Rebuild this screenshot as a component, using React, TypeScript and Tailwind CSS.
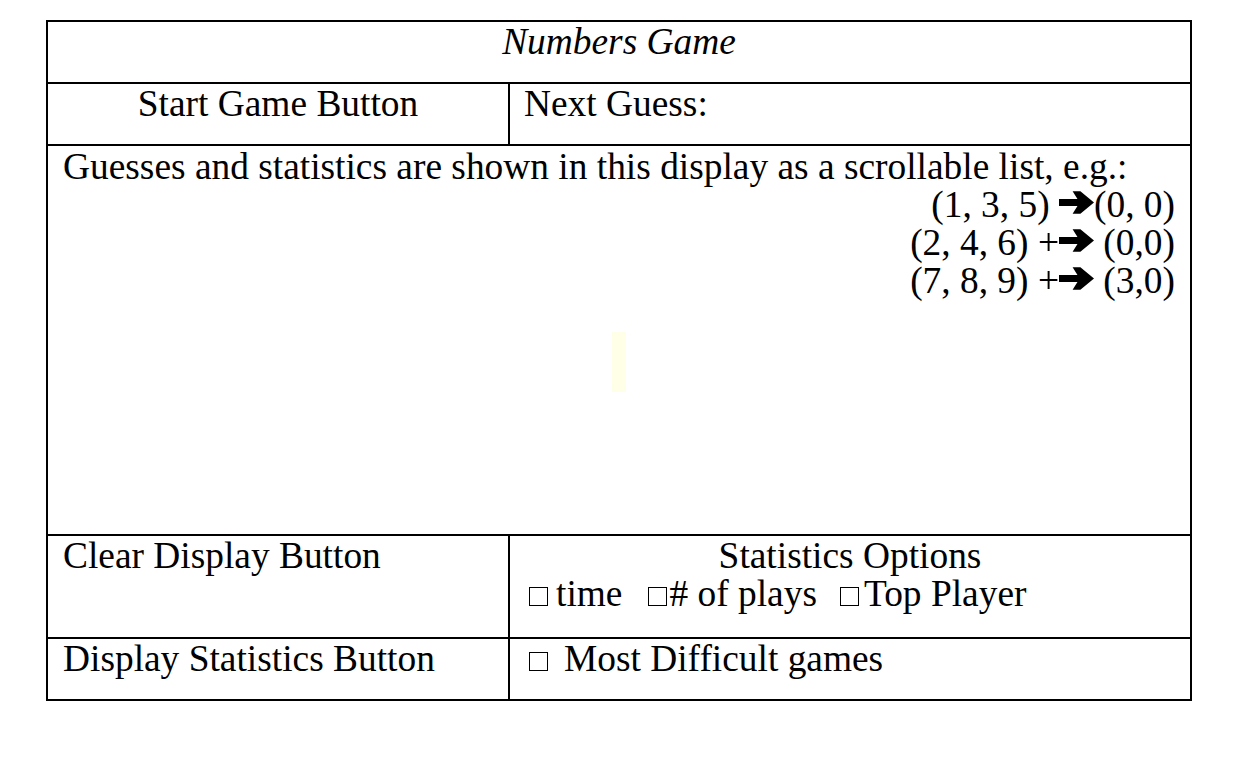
import React from 'react';

// Heavy wide-headed arrow used between a guess and its score
const Arrow: React.FC = () => (
  <svg
    width="35"
    height="23"
    viewBox="0 0 36 23"
    className="inline-block align-[3px]"
    aria-hidden="true"
  >
    <polygon points="0,8 19,8 14,0 22,0 36,11.5 22,23 14,23 19,15 0,15" fill="#000" />
  </svg>
);

const Box: React.FC<{ className?: string }> = ({ className = '' }) => (
  <span className={`inline-block w-[19px] h-[19px] border-[1.5px] border-black ${className}`} />
);

const guesses = [
  { guess: '(1, 3, 5)', plus: false, score: '(0, 0)' },
  { guess: '(2, 4, 6)', plus: true, score: '(0,0)' },
  { guess: '(7, 8, 9)', plus: true, score: '(3,0)' },
];

export default function App() {
  return (
    <div className="min-h-screen w-full bg-white text-black font-['Liberation_Serif','Times_New_Roman',serif] text-[37.4px] leading-[38px] pt-[20px] pl-[46px]">
      <div className="w-[1146px] border-2 border-black">
        {/* Title */}
        <div className="h-[60px] pt-[1px] text-center italic">Numbers Game</div>

        {/* Start / next guess */}
        <div className="flex h-[62px] border-t-2 border-black">
          <div className="w-[460px] pt-[1px] text-center">Start Game Button</div>
          <div className="flex-1 border-l-2 border-black pt-[1px] px-[14px]">Next Guess:</div>
        </div>

        {/* Scrollable guess list */}
        <div className="relative h-[390px] pt-[2px] border-t-2 border-black px-[15px]">
          <div>Guesses and statistics are shown in this display as a scrollable list, e.g.:</div>
          <div className="flex flex-col items-end">
            {guesses.map((g) => (
              <div key={g.guess} className="whitespace-pre">
                {g.guess} {g.plus ? '+' : ''}
                <Arrow />
                {g.plus ? ' ' : ''}
                {g.score}
              </div>
            ))}
          </div>
          <div className="absolute left-[564px] top-[186px] w-[14px] h-[60px] bg-[#fffee6]" />
        </div>

        {/* Clear / statistics options */}
        <div className="flex h-[103px] border-t-2 border-black">
          <div className="w-[460px] pt-[1px] px-[15px]">Clear Display Button</div>
          <div className="flex-1 border-l-2 border-black pt-[1px] px-[14px]">
            <div className="text-center">Statistics Options</div>
            <div className="whitespace-nowrap">
              <Box className="ml-[5px] mr-[8px]" />
              time
              <Box className="ml-[26px] mr-[2px]" />
              # of plays
              <Box className="ml-[23px] mr-[5px]" />
              Top Player
            </div>
          </div>
        </div>

        {/* Display statistics / difficult games */}
        <div className="flex h-[62px] border-t-2 border-black">
          <div className="w-[460px] pt-[1px] px-[15px]">Display Statistics Button</div>
          <div className="flex-1 border-l-2 border-black pt-[1px] px-[14px] whitespace-nowrap">
            <Box className="ml-[5px] mr-[16px]" />
            Most Difficult games
          </div>
        </div>
      </div>
    </div>
  );
}
